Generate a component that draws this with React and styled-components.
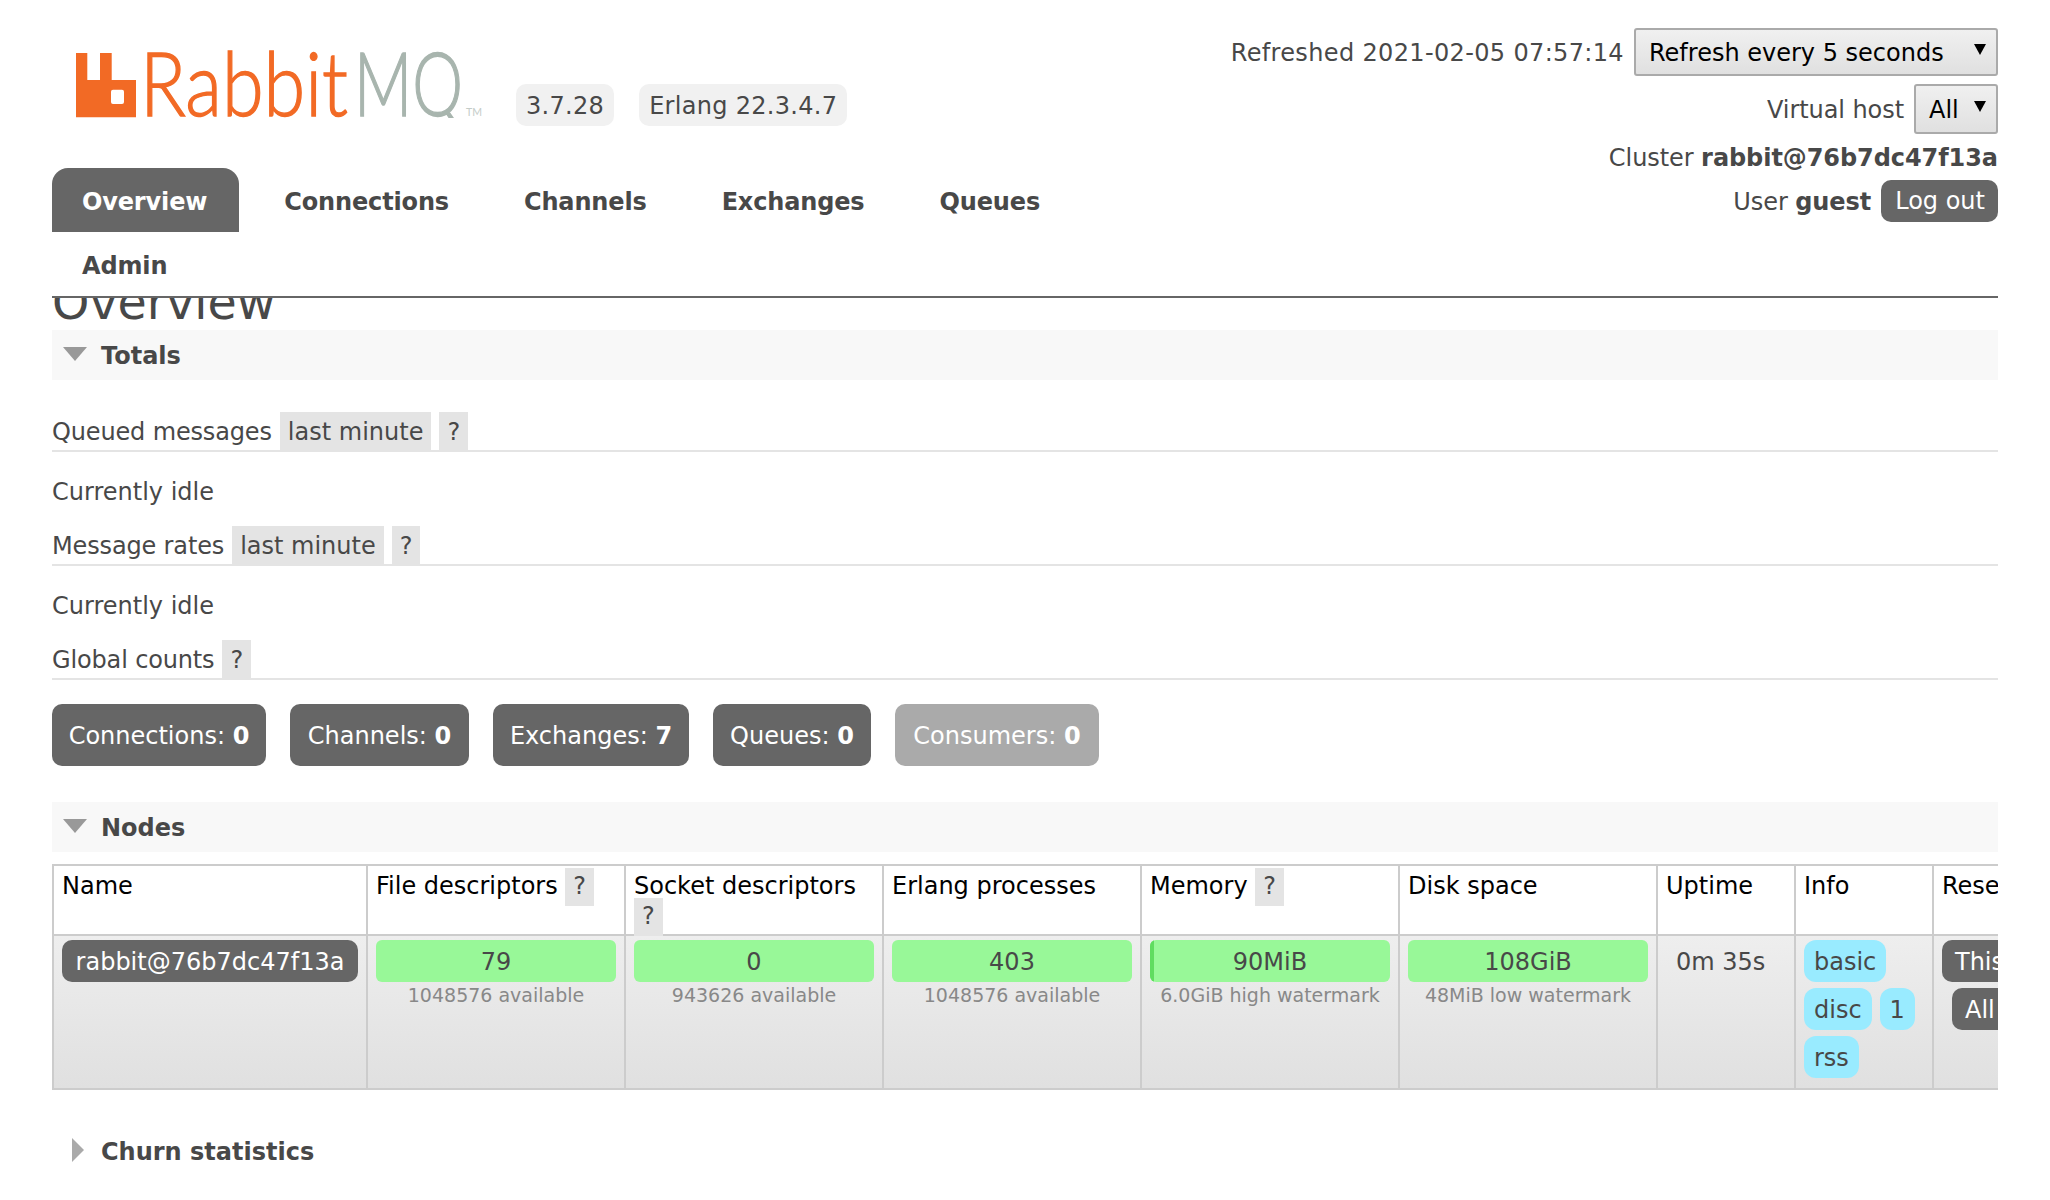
import React from "react";
import styled, { createGlobalStyle } from "styled-components";

const GlobalStyle = createGlobalStyle`
  html, body {
    margin: 0;
    background: #fff;
    overflow: hidden;
    font-family: "DejaVu Sans", Verdana, sans-serif;
    font-size: 24px;
    color: #484848;
  }
`;

const Logo = () => (
  <LogoSvg viewBox="0 0 440 80" aria-label="RabbitMQ">
    <defs>
      {/* the Q in the logo has its tail flat on the baseline */}
      <clipPath id="mq-baseline">
        <rect x="296" y="0" width="118" height="73" />
      </clipPath>
    </defs>
    <path
      fill="#f26a25"
      fillRule="evenodd"
      d="M24 8h11.3v27H48V8h11.7v27H84v37.3H24zM59 46.7a2 2 0 0 1 2-2h9a2 2 0 0 1 2 2v10.300a2 2 0 0 1-2 2h-9a2 2 0 0 1-2-2z"
    />
    <text x="88" y="71" fontFamily="Lato, sans-serif" fontWeight="300" fontSize="88" fill="#f26a25" stroke="#f26a25" strokeWidth="1.4" textLength="208" lengthAdjust="spacingAndGlyphs">Rabbit</text>
    <text x="302" y="71" clipPath="url(#mq-baseline)" fontFamily="Lato, sans-serif" fontWeight="300" fontSize="88" fill="#a8b5ae" stroke="#a8b5ae" strokeWidth="1.4" textLength="109" lengthAdjust="spacingAndGlyphs">MQ</text>
    <text x="414" y="71" fontFamily="Lato, sans-serif" fontSize="12" fill="#c4ccc8" textLength="16" lengthAdjust="spacingAndGlyphs">TM</text>
  </LogoSvg>
);

const tabs = ["Overview", "Connections", "Channels", "Exchanges", "Queues", "Admin"];
const counts = [
  { label: "Connections", value: 0, width: 214 },
  { label: "Channels", value: 0, width: 179 },
  { label: "Exchanges", value: 7, width: 196 },
  { label: "Queues", value: 0, width: 158 },
  { label: "Consumers", value: 0, width: 204, muted: true },
];

const columns = [314, 258, 258, 258, 258, 258, 138, 138, 200];

const stats = [
  { value: "79", note: "1048576 available" },
  { value: "0", note: "943626 available" },
  { value: "403", note: "1048576 available" },
  { value: "90MiB", note: "6.0GiB high watermark", used: 1.6 },
  { value: "108GiB", note: "48MiB low watermark" },
];

export default function App() {
  return (
    <Page>
      <GlobalStyle />
      <Header>
        <HeaderLeft>
          <Brand>
            <Logo />
            <VersionBadge>3.7.28</VersionBadge>
            <VersionBadge>Erlang 22.3.4.7</VersionBadge>
          </Brand>
          <Nav>
            {tabs.map((tab, i) => (
              <Tab key={tab} $active={i === 0}>{tab}</Tab>
            ))}
          </Nav>
        </HeaderLeft>
        <HeaderRight>
          <InfoRow>
            <InfoLabel $spaced>Refreshed 2021-02-05 07:57:14</InfoLabel>
            <SelectBox $width={364}>
              Refresh every 5 seconds
              <SelectArrow />
            </SelectBox>
          </InfoRow>
          <InfoRow>
            <InfoLabel>Virtual host</InfoLabel>
            <SelectBox $width={84} $tall>
              All
              <SelectArrow />
            </SelectBox>
          </InfoRow>
          <InfoRow>
            <InfoLabel>Cluster <b>rabbit@76b7dc47f13a</b></InfoLabel>
          </InfoRow>
          <InfoRow>
            <InfoLabel>User <b>guest</b></InfoLabel>
            <LogoutButton>Log out</LogoutButton>
          </InfoRow>
        </HeaderRight>
      </Header>

      <TitleClip>
        <Title>Overview</Title>
      </TitleClip>

      <SectionBar $shaded>
        <Arrow $open />
        Totals
      </SectionBar>

      <SubHead $top={32}>
        Queued messages
        <SubChip>last minute</SubChip>
        <SubChip>?</SubChip>
      </SubHead>
      <IdleText>Currently idle</IdleText>
      <SubHead>
        Message rates
        <SubChip>last minute</SubChip>
        <SubChip>?</SubChip>
      </SubHead>
      <IdleText>Currently idle</IdleText>
      <SubHead>
        Global counts
        <SubChip>?</SubChip>
      </SubHead>

      <CountRow>
        {counts.map((c) => (
          <CountBadge key={c.label} $muted={c.muted} $width={c.width}>
            {c.label}: <b>{c.value}</b>
          </CountBadge>
        ))}
      </CountRow>

      <SectionBar $shaded>
        <Arrow $open />
        Nodes
      </SectionBar>

      <TableClip>
        <NodesTable>
          <colgroup>
            {columns.map((w, i) => (
              <col key={i} width={w} />
            ))}
          </colgroup>
          <thead>
            <tr>
              <th>Name</th>
              <th>File descriptors <HeadChip>?</HeadChip></th>
              <th>Socket descriptors <HeadChip>?</HeadChip></th>
              <th>Erlang processes</th>
              <th>Memory <HeadChip>?</HeadChip></th>
              <th>Disk space</th>
              <th>Uptime</th>
              <th>Info</th>
              <th>Reset stats</th>
            </tr>
          </thead>
          <tbody>
            <tr>
              <td><NodeChip>rabbit@76b7dc47f13a</NodeChip></td>
              {stats.map((s) => (
                <td key={s.note}>
                  <StatBar>
                    {s.used && <StatFill style={{ width: `${s.used}%` }} />}
                    <StatValue>{s.value}</StatValue>
                  </StatBar>
                  <StatNote>{s.note}</StatNote>
                </td>
              ))}
              <td><Uptime>0m 35s</Uptime></td>
              <td>
                <InfoTags>
                  <InfoTag>basic</InfoTag>
                  <InfoTag>disc</InfoTag>
                  <InfoTag>1</InfoTag>
                  <InfoTag>rss</InfoTag>
                </InfoTags>
              </td>
              <td>
                <ResetStack>
                  <ResetButton>This node</ResetButton>
                  <ResetButton $indent>All nodes</ResetButton>
                </ResetStack>
              </td>
            </tr>
          </tbody>
        </NodesTable>
      </TableClip>

      <SectionBar $top={36}>
        <Arrow />
        Churn statistics
      </SectionBar>
    </Page>
  );
}

// Header
const Page = styled.div`
  width: 2050px;
  box-sizing: border-box;
  padding: 0 52px;
`;

const Header = styled.header`
  display: flex;
  justify-content: space-between;
  height: 296px;
  border-bottom: 2px solid #666;
`;

const HeaderLeft = styled.div`
  display: flex;
  flex-direction: column;
`;

const Brand = styled.div`
  display: flex;
  align-items: flex-start;
  height: 168px;
`;

const LogoSvg = styled.svg`
  width: 440px;
  height: 80px;
  margin: 45px 24px 0 0;
  flex: none;
  overflow: visible;
`;

const VersionBadge = styled.span`
  height: 42px;
  line-height: 44px;
  margin: 84px 25px 0 0;
  padding: 0 10px;
  letter-spacing: 0.3px;
  border-radius: 10px;
  background: #f1f1f1;
`;

const Nav = styled.nav`
  display: flex;
  flex-wrap: wrap;
  column-gap: 15px;
  width: 1100px;
`;

const Tab = styled.a`
  box-sizing: border-box;
  height: 64px;
  line-height: 59px;
  padding: ${(p) => (p.$active ? "5px 32px 0 30px" : "5px 30px 0")};
  font-weight: bold;
  letter-spacing: -0.15px;
  border-radius: 16px 16px 0 0;
  color: ${(p) => (p.$active ? "#fff" : "#484848")};
  background: ${(p) => (p.$active ? "#666" : "transparent")};
`;

const HeaderRight = styled.div`
  display: flex;
  flex-direction: column;
  align-items: flex-end;
  gap: 8px;
  padding-top: 28px;
`;

const InfoRow = styled.div`
  display: flex;
  align-items: center;
  gap: 10px;
  min-height: 30px;
`;

const InfoLabel = styled.span`
  display: block;
  height: 30px;
  line-height: 32px;
  letter-spacing: ${(p) => (p.$spaced ? 0.35 : -0.07)}px;
`;

const SelectBox = styled.div`
  display: flex;
  align-items: center;
  justify-content: space-between;
  box-sizing: border-box;
  width: ${(p) => p.$width}px;
  height: ${(p) => (p.$tall ? 50 : 48)}px;
  padding: 2px 10px 0 13px;
  color: #000;
  border: 2px solid #aaa;
  border-radius: 3px;
  background: linear-gradient(#f0f0f0, #e0e0e0);
`;

const SelectArrow = styled.span`
  width: 0;
  height: 0;
  border-left: 6px solid transparent;
  border-right: 6px solid transparent;
  border-top: 11px solid #000;
  margin-bottom: 8px;
`;

const LogoutButton = styled.span`
  height: 42px;
  line-height: 42px;
  padding: 0 13px 0 14px;
  color: #fff;
  background: #666;
  border-radius: 10px;
`;

// Page title, scrolled up behind the header rule
const TitleClip = styled.div`
  display: flex;
  align-items: flex-end;
  height: 32px;
  overflow: hidden;
`;

const Title = styled.h1`
  margin: 0 0 3px;
  font-size: 47.5px;
  line-height: 48px;
  font-weight: normal;
  color: #484848;
`;

// Sections
const SectionBar = styled.div`
  display: flex;
  align-items: center;
  box-sizing: border-box;
  height: 50px;
  margin-top: ${(p) => p.$top || 0}px;
  padding: 2px 0 0 11px;
  font-weight: bold;
  background: ${(p) => (p.$shaded ? "#f8f8f8" : "transparent")};
`;

const Arrow = styled.span`
  width: 0;
  height: 0;
  margin-right: 14px;
  ${(p) =>
    p.$open
      ? `margin-top: -4px;
         border-left: 12px solid transparent;
         border-right: 12px solid transparent;
         border-top: 14px solid #999;`
      : `margin-top: -4px;
         margin-left: 9px;
         margin-right: 17px;
         border-top: 12px solid transparent;
         border-bottom: 12px solid transparent;
         border-left: 12px solid #aaa;`}
`;

const SubHead = styled.div`
  display: flex;
  align-items: stretch;
  height: 38px;
  line-height: 41px;
  letter-spacing: -0.15px;
  margin-top: ${(p) => p.$top || 0}px;
  border-bottom: 2px solid #e4e4e4;
`;

const SubChip = styled.span`
  margin-left: 8px;
  padding: 0 8px;
  letter-spacing: 0;
  background: #e4e4e4;
`;

const IdleText = styled.div`
  height: 30px;
  line-height: 30px;
  margin: 25px 0 19px;
`;

const CountRow = styled.div`
  display: flex;
  gap: 24px;
  margin: 24px 0 36px;
`;

const CountBadge = styled.span`
  box-sizing: border-box;
  width: ${(p) => p.$width}px;
  height: 62px;
  line-height: 64px;
  text-align: center;
  white-space: nowrap;
  color: #fff;
  border-radius: 10px;
  background: ${(p) => (p.$muted ? "#aaa" : "#666")};
`;

// Nodes table
const TableClip = styled.div`
  margin-top: 12px;
  overflow: hidden;
`;

const NodesTable = styled.table`
  table-layout: fixed;
  width: 2082px;
  border-collapse: separate;
  border-spacing: 0;
  border-top: 2px solid #ccc;
  border-left: 2px solid #ccc;

  th, td {
    border-right: 2px solid #ccc;
    border-bottom: 2px solid #ccc;
    vertical-align: top;
    text-align: left;
  }

  th {
    padding: 5px 8px 3px;
    line-height: 30px;
    font-weight: normal;
    color: #000;
    background: #fff;
  }

  td {
    padding: 4px 8px 10px;
    background: linear-gradient(#eee, #e0e0e0);
  }
`;

const HeadChip = styled.span`
  padding: 4px 8px 6px;
  background: #e4e4e4;
  color: #484848;
`;

const NodeChip = styled.div`
  height: 42px;
  line-height: 44px;
  text-align: center;
  color: #fff;
  background: #666;
  border-radius: 10px;
`;

const StatBar = styled.div`
  position: relative;
  height: 42px;
  border-radius: 6px;
  overflow: hidden;
  background: #98f898;
`;

const StatFill = styled.div`
  position: absolute;
  left: 0;
  top: 0;
  bottom: 0;
  background: #60dc60;
`;

const StatValue = styled.div`
  position: relative;
  line-height: 44px;
  text-align: center;
`;

const StatNote = styled.div`
  height: 26px;
  line-height: 26px;
  font-size: 19px;
  text-align: center;
  color: #888;
`;

const Uptime = styled.div`
  line-height: 44px;
  padding-left: 10px;
`;

const InfoTags = styled.div`
  display: flex;
  flex-wrap: wrap;
  gap: 6px 8px;
`;

const InfoTag = styled.span`
  height: 42px;
  line-height: 44px;
  padding: 0 10px;
  border-radius: 12px;
  background: #99ebff;
`;

const ResetStack = styled.div`
  display: flex;
  flex-direction: column;
  align-items: flex-start;
  gap: 6px;
`;

const ResetButton = styled.span`
  height: 42px;
  line-height: 44px;
  padding: 0 13px;
  margin-left: ${(p) => (p.$indent ? 10 : 0)}px;
  white-space: nowrap;
  color: #fff;
  background: #666;
  border-radius: 10px;
`;
